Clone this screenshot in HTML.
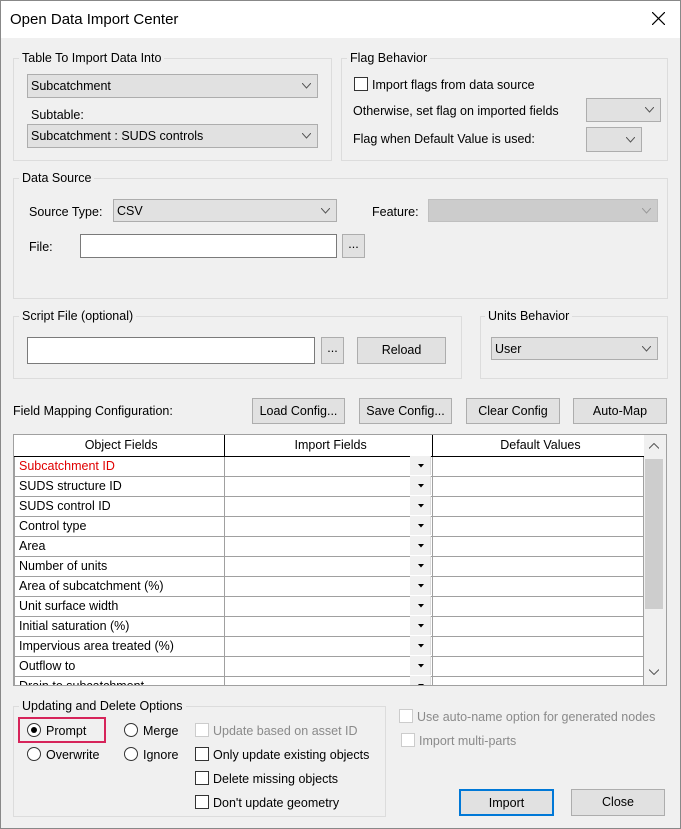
<!DOCTYPE html><html><head><style>
*{box-sizing:border-box}
body{margin:0;width:681px;height:829px;overflow:hidden;font-family:"Liberation Sans",Arial,sans-serif;font-size:12.5px;color:#000;background:#f0f0f0;position:relative}
.a{position:absolute}
.t{position:absolute;white-space:nowrap;line-height:14px}
.g{position:absolute;border:1px solid #dcdcdc}
.gl{position:absolute;background:#f0f0f0;padding:0 3px;white-space:nowrap;line-height:14px}
.cb{position:absolute;background:#e1e1e1;border:1px solid #adadad}
.cb span{position:absolute;left:3px;top:50%;transform:translateY(-50%)}
.cb svg{position:absolute;right:6px;top:50%;margin-top:-3px}
.btn{position:absolute;background:#e1e1e1;border:1px solid #adadad;text-align:center}
.chk{position:absolute;width:14px;height:14px;border:1px solid #333;background:#fff}
.rad{position:absolute;width:14px;height:14px;border:1px solid #333;border-radius:50%;background:#fff}
table{border-collapse:collapse;font-family:"Liberation Sans Narrow","Liberation Sans",sans-serif;font-size:12.5px}
td{border:1px solid #a0a0a0;height:20px;padding:0 0 0 4px;background:#fff;white-space:nowrap;overflow:hidden}
</style></head><body>
<div class="a" style="left:0;top:0;width:681px;height:829px;border:1px solid #888"></div>
<div class="a" style="left:1px;top:1px;width:679px;height:37px;background:#fff"></div>
<div class="t" style="left:10px;top:11px;font-size:15px;line-height:17px">Open Data Import Center</div>
<svg class="a" style="left:652px;top:12px" width="13" height="13"><path d="M0 0L13 13M13 0L0 13" stroke="#000" stroke-width="1.2"/></svg>

<div class="g" style="left:13px;top:58px;width:319px;height:103px"></div><div class="gl" style="left:19px;top:51px">Table To Import Data Into</div>
<div class="cb" style="left:27px;top:74px;width:291px;height:24px"><span>Subcatchment</span><svg width="9" height="6"><path d="M0 0L4.5 5L9 0" stroke="#555" fill="none"/></svg></div>
<div class="t" style="left:31px;top:108px">Subtable:</div>
<div class="cb" style="left:27px;top:124px;width:291px;height:24px"><span>Subcatchment : SUDS controls</span><svg width="9" height="6"><path d="M0 0L4.5 5L9 0" stroke="#555" fill="none"/></svg></div>

<div class="g" style="left:341px;top:58px;width:327px;height:103px"></div><div class="gl" style="left:347px;top:51px">Flag Behavior</div>
<div class="chk" style="left:354px;top:77px"></div><div class="t" style="left:372px;top:78px">Import flags from data source</div>
<div class="t" style="left:353px;top:104px">Otherwise, set flag on imported fields</div>
<div class="cb" style="left:586px;top:98px;width:75px;height:24px"><svg width="9" height="6"><path d="M0 0L4.5 5L9 0" stroke="#555" fill="none"/></svg></div>
<div class="t" style="left:353px;top:132px">Flag when Default Value is used:</div>
<div class="cb" style="left:586px;top:127px;width:56px;height:25px"><svg width="9" height="6"><path d="M0 0L4.5 5L9 0" stroke="#555" fill="none"/></svg></div>

<div class="g" style="left:13px;top:178px;width:655px;height:121px"></div><div class="gl" style="left:19px;top:171px">Data Source</div>
<div class="t" style="left:29px;top:205px">Source Type:</div>
<div class="cb" style="left:113px;top:199px;width:224px;height:23px"><span>CSV</span><svg width="9" height="6"><path d="M0 0L4.5 5L9 0" stroke="#555" fill="none"/></svg></div>
<div class="t" style="left:372px;top:205px">Feature:</div>
<div class="cb" style="left:428px;top:199px;width:230px;height:23px;background:#ccc;border-color:#bfbfbf"><svg width="9" height="6"><path d="M0 0L4.5 5L9 0" stroke="#999" fill="none"/></svg></div>
<div class="t" style="left:29px;top:240px">File:</div>
<div class="a" style="left:80px;top:234px;width:257px;height:24px;background:#fff;border:1px solid #7a7a7a"></div>
<div class="btn" style="left:342px;top:234px;width:23px;height:24px;line-height:18px">...</div>

<div class="g" style="left:13px;top:316px;width:449px;height:63px"></div><div class="gl" style="left:19px;top:309px">Script File (optional)</div>
<div class="a" style="left:27px;top:337px;width:288px;height:27px;background:#fff;border:1px solid #7a7a7a"></div>
<div class="btn" style="left:321px;top:337px;width:23px;height:27px;line-height:20px">...</div>
<div class="btn" style="left:357px;top:337px;width:89px;height:27px;line-height:25px">Reload</div>

<div class="g" style="left:480px;top:316px;width:188px;height:63px"></div><div class="gl" style="left:485px;top:309px">Units Behavior</div>
<div class="cb" style="left:491px;top:337px;width:167px;height:23px"><span>User</span><svg width="9" height="6"><path d="M0 0L4.5 5L9 0" stroke="#555" fill="none"/></svg></div>

<div class="t" style="left:13px;top:404px">Field Mapping Configuration:</div>
<div class="btn" style="left:252px;top:398px;width:93px;height:26px;line-height:24px">Load Config...</div>
<div class="btn" style="left:359px;top:398px;width:93px;height:26px;line-height:24px">Save Config...</div>
<div class="btn" style="left:466px;top:398px;width:94px;height:26px;line-height:24px">Clear Config</div>
<div class="btn" style="left:573px;top:398px;width:94px;height:26px;line-height:24px">Auto-Map</div>

<div id="tb" class="a" style="left:13px;top:434px;width:654px;height:252px;border:1px solid #a0a0a0;background:#fff;overflow:hidden">
<table style="position:absolute;left:0;top:0;width:630px">
<tr><td style="width:210px;text-align:center;border-color:#000;border-width:0 1px 1px 0;height:21px">Object Fields</td><td style="width:209px;text-align:center;border-color:#000;border-width:0 1px 1px 0">Import Fields</td><td style="width:211px;text-align:center;border-color:#000;border-width:0 0 1px 0">Default Values</td></tr>
<tr><td style="color:#e00000">Subcatchment ID</td><td></td><td></td></tr>
<tr><td>SUDS structure ID</td><td></td><td></td></tr>
<tr><td>SUDS control ID</td><td></td><td></td></tr>
<tr><td>Control type</td><td></td><td></td></tr>
<tr><td>Area</td><td></td><td></td></tr>
<tr><td>Number of units</td><td></td><td></td></tr>
<tr><td>Area of subcatchment (%)</td><td></td><td></td></tr>
<tr><td>Unit surface width</td><td></td><td></td></tr>
<tr><td>Initial saturation (%)</td><td></td><td></td></tr>
<tr><td>Impervious area treated (%)</td><td></td><td></td></tr>
<tr><td>Outflow to</td><td></td><td></td></tr>
<tr><td>Drain to subcatchment</td><td></td><td></td></tr>
</table>
<div class="a" style="left:630px;top:0;width:22px;height:252px;background:#f0f0f0"></div>
<div class="a" style="left:631px;top:24px;width:18px;height:150px;background:#cdcdcd"></div>
<svg class="a" style="left:635px;top:8px" width="10" height="6"><path d="M0 5.5L5 0.5L10 5.5" stroke="#555" fill="none"/></svg>
<svg class="a" style="left:635px;top:234px" width="10" height="6"><path d="M0 0.5L5 5.5L10 0.5" stroke="#555" fill="none"/></svg>
</div>
<script>
var h='';for(var i=0;i<12;i++){h+='<div class="a" style="left:396px;top:'+(21+i*20)+'px;width:21px;height:19px;background:#f0f0f0;border-right:1px solid #ddd"></div><svg class="a" style="left:404px;top:'+(29+i*20)+'px" width="6" height="4"><path d="M0 0H6L3 3.5Z" fill="#000"/></svg>'}
document.getElementById('tb').insertAdjacentHTML('beforeend',h);
</script>

<div class="g" style="left:13px;top:706px;width:373px;height:111px"></div><div class="gl" style="left:19px;top:699px">Updating and Delete Options</div>
<div class="a" style="left:18px;top:717px;width:88px;height:26px;border:2px solid #d6245a"></div>
<div class="rad" style="left:27px;top:723px"></div><div class="a" style="left:31px;top:727px;width:6px;height:6px;border-radius:50%;background:#000"></div>
<div class="t" style="left:46px;top:724px">Prompt</div>
<div class="rad" style="left:124px;top:723px"></div><div class="t" style="left:143px;top:724px">Merge</div>
<div class="rad" style="left:27px;top:747px"></div><div class="t" style="left:46px;top:748px">Overwrite</div>
<div class="rad" style="left:124px;top:747px"></div><div class="t" style="left:143px;top:748px">Ignore</div>
<div class="chk" style="left:195px;top:723px;border-color:#ccc"></div><div class="t" style="left:213px;top:724px;color:#8a8a8a">Update based on asset ID</div>
<div class="chk" style="left:195px;top:747px"></div><div class="t" style="left:213px;top:748px">Only update existing objects</div>
<div class="chk" style="left:195px;top:771px"></div><div class="t" style="left:213px;top:772px">Delete missing objects</div>
<div class="chk" style="left:195px;top:795px"></div><div class="t" style="left:213px;top:796px">Don't update geometry</div>
<div class="chk" style="left:399px;top:709px;border-color:#ccc"></div><div class="t" style="left:417px;top:710px;color:#8a8a8a">Use auto-name option for generated nodes</div>
<div class="chk" style="left:401px;top:733px;border-color:#ccc"></div><div class="t" style="left:419px;top:734px;color:#8a8a8a">Import multi-parts</div>
<div class="btn" style="left:459px;top:789px;width:95px;height:27px;line-height:24px;border:2px solid #0078d7">Import</div>
<div class="btn" style="left:571px;top:789px;width:94px;height:27px;line-height:25px">Close</div>
</body></html>
